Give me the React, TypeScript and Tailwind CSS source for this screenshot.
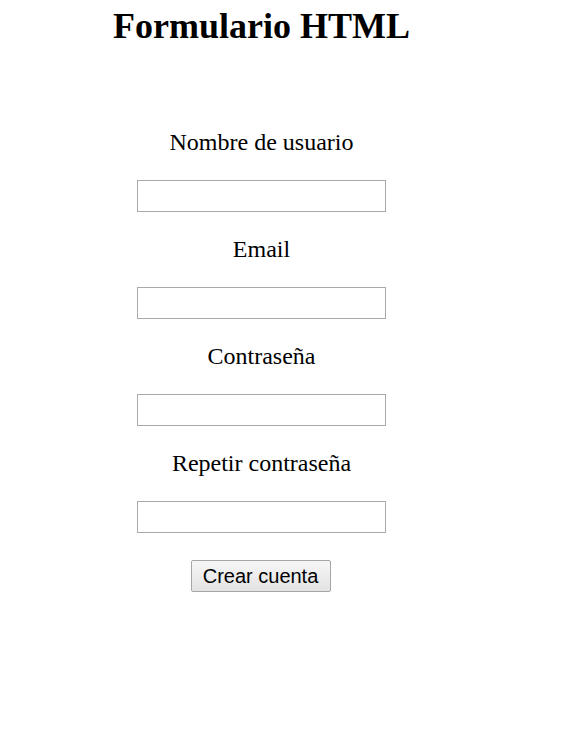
const FIELDS = [
  { id: 'usuario', label: 'Nombre de usuario', type: 'text' },
  { id: 'email', label: 'Email', type: 'email' },
  { id: 'pass', label: 'Contraseña', type: 'password' },
  { id: 'pass2', label: 'Repetir contraseña', type: 'password' },
];

export default function App() {
  return (
    <div className="min-h-[730px] w-[523px] bg-white text-black font-['Liberation_Serif','Times_New_Roman',serif]">
      <h1 className="pt-[6px] text-center text-[36px] font-bold leading-10">Formulario HTML</h1>

      <form className="mt-[83px] flex flex-col items-center" onSubmit={(e) => e.preventDefault()}>
        <div className="flex flex-col items-center gap-6">
          {FIELDS.map((f) => (
            <div key={f.id} className="flex flex-col items-center gap-6">
              <label htmlFor={f.id} className="text-[24px] leading-[27px]">
                {f.label}
              </label>
              <input
                id={f.id}
                type={f.type}
                className="h-[32px] w-[249px] border border-[#a9a9a9] bg-white px-1 outline-none"
              />
            </div>
          ))}
        </div>
        <button
          type="submit"
          className="mt-[27px] mr-[2px] h-[32px] w-[140px] rounded-[2px] border border-[#a6a6a6] bg-gradient-to-b from-[#f6f6f6] to-[#e3e3e3] font-['Liberation_Sans',Arial,sans-serif] text-[20px] leading-none text-black"
        >
          Crear cuenta
        </button>
      </form>
    </div>
  );
}
